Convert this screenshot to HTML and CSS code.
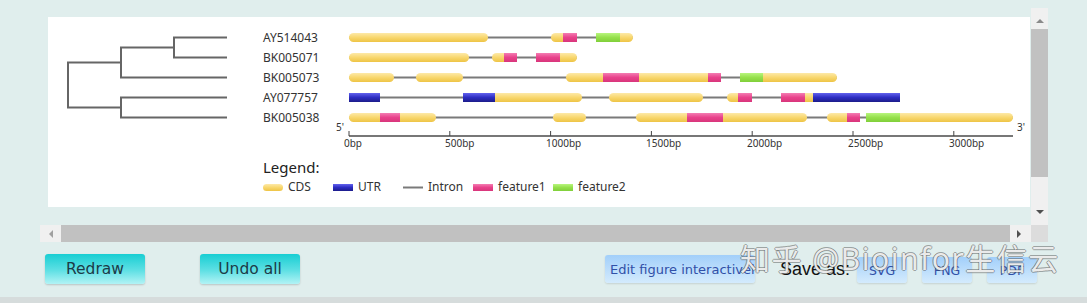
FILE: index.html
```html
<!DOCTYPE html>
<html lang="en">
<head>
  <meta charset="UTF-8">
  <title>Gene Structure Viewer</title>
  <link rel="stylesheet" href="styles.css">
</head>
<body>
  <div class="viewer">
    <div class="viewport">
      <div class="canvas">
        <svg class="figure" width="982" height="190" viewBox="48 17 982 190">
          <defs>
            <linearGradient id="gCds" x1="0" y1="0" x2="0" y2="1">
              <stop offset="0" stop-color="#fde9a8"/>
              <stop offset="0.5" stop-color="#f8d76e"/>
              <stop offset="1" stop-color="#eec446"/>
            </linearGradient>
            <linearGradient id="gUtr" x1="0" y1="0" x2="0" y2="1">
              <stop offset="0" stop-color="#6262ee"/>
              <stop offset="0.5" stop-color="#2c2cc2"/>
              <stop offset="1" stop-color="#1c1c8a"/>
            </linearGradient>
            <linearGradient id="gF1" x1="0" y1="0" x2="0" y2="1">
              <stop offset="0" stop-color="#f47db2"/>
              <stop offset="0.5" stop-color="#e8428b"/>
              <stop offset="1" stop-color="#d8367b"/>
            </linearGradient>
            <linearGradient id="gF2" x1="0" y1="0" x2="0" y2="1">
              <stop offset="0" stop-color="#b8f57e"/>
              <stop offset="0.5" stop-color="#95e04c"/>
              <stop offset="1" stop-color="#80cf3a"/>
            </linearGradient>
          </defs>

          <!-- tree -->
          <g class="tree">
            <path d="M227 37.5 H174 V57.5 H227"/>
            <path d="M174 47.5 H121 V77.5 H227"/>
            <path d="M121 62.5 H68 V107.5 H121"/>
            <path d="M227 97.5 H121 V117.5 H227"/>
          </g>

          <g class="labels">
            <text x="263" y="42">AY514043</text>
            <text x="263" y="62">BK005071</text>
            <text x="263" y="82">BK005073</text>
            <text x="263" y="102">AY077757</text>
            <text x="263" y="122">BK005038</text>
          </g>

          <!-- introns -->
          <g class="intron">
            <line x1="349" y1="37.5" x2="633" y2="37.5"/>
            <line x1="349" y1="57.5" x2="577" y2="57.5"/>
            <line x1="349" y1="77.5" x2="837" y2="77.5"/>
            <line x1="349" y1="97.5" x2="900" y2="97.5"/>
            <line x1="349" y1="117.5" x2="1013" y2="117.5"/>
          </g>

          <!-- AY514043 -->
          <rect class="cds" x="349" y="33" width="139" height="9" rx="4.5"/>
          <rect class="cds" x="551" y="33" width="26" height="9" rx="4.5"/>
          <rect class="f1" x="563" y="33" width="14" height="9"/>
          <rect class="cds" x="596" y="33" width="37" height="9" rx="4.5"/>
          <rect class="f2" x="596" y="33" width="24" height="9"/>

          <!-- BK005071 -->
          <rect class="cds" x="349" y="53" width="120" height="9" rx="4.5"/>
          <rect class="cds" x="492" y="53" width="25" height="9" rx="4.5"/>
          <rect class="f1" x="504" y="53" width="13" height="9"/>
          <rect class="cds" x="536" y="53" width="41" height="9" rx="4.5"/>
          <rect class="f1" x="536" y="53" width="24" height="9"/>

          <!-- BK005073 -->
          <rect class="cds" x="349" y="73" width="45" height="9" rx="4.5"/>
          <rect class="cds" x="416" y="73" width="47" height="9" rx="4.5"/>
          <rect class="cds" x="566" y="73" width="155" height="9" rx="4.5"/>
          <rect class="f1" x="603" y="73" width="36" height="9"/>
          <rect class="f1" x="708" y="73" width="13" height="9"/>
          <rect class="cds" x="740" y="73" width="97" height="9" rx="4.5"/>
          <rect class="f2" x="740" y="73" width="23" height="9"/>

          <!-- AY077757 -->
          <rect class="utr" x="349" y="93" width="31" height="9"/>
          <rect class="cds" x="463" y="93" width="119" height="9" rx="4.5"/>
          <rect class="utr" x="463" y="93" width="32" height="9"/>
          <rect class="cds" x="609" y="93" width="94" height="9" rx="4.5"/>
          <rect class="cds" x="727" y="93" width="25" height="9" rx="4.5"/>
          <rect class="f1" x="738" y="93" width="14" height="9"/>
          <rect class="cds" x="781" y="93" width="119" height="9" rx="4.5"/>
          <rect class="f1" x="781" y="93" width="24" height="9"/>
          <rect class="utr" x="813" y="93" width="87" height="9"/>

          <!-- BK005038 -->
          <rect class="cds" x="349" y="113" width="87" height="9" rx="4.5"/>
          <rect class="f1" x="380" y="113" width="20" height="9"/>
          <rect class="cds" x="553" y="113" width="33" height="9" rx="4.5"/>
          <rect class="cds" x="636" y="113" width="171" height="9" rx="4.5"/>
          <rect class="f1" x="687" y="113" width="36" height="9"/>
          <rect class="cds" x="827" y="113" width="33" height="9" rx="4.5"/>
          <rect class="f1" x="847" y="113" width="13" height="9"/>
          <rect class="cds" x="866" y="113" width="147" height="9" rx="4.5"/>
          <rect class="f2" x="866" y="113" width="34" height="9"/>

          <!-- axis -->
          <text class="end" x="336" y="131">5'</text>
          <text class="end" x="1017" y="131">3'</text>
          <line class="axis" x1="349" y1="136" x2="1013" y2="136"/>
          <g class="ticks">
            <line x1="349" y1="131" x2="349" y2="136"/>
            <line x1="449.8" y1="131" x2="449.8" y2="136"/>
            <line x1="550.6" y1="131" x2="550.6" y2="136"/>
            <line x1="651.4" y1="131" x2="651.4" y2="136"/>
            <line x1="752.2" y1="131" x2="752.2" y2="136"/>
            <line x1="853" y1="131" x2="853" y2="136"/>
            <line x1="953.8" y1="131" x2="953.8" y2="136"/>
          </g>
          <g class="tick-labels">
            <text x="344" y="147">0bp</text>
            <text x="445" y="147">500bp</text>
            <text x="546" y="147">1000bp</text>
            <text x="646" y="147">1500bp</text>
            <text x="747" y="147">2000bp</text>
            <text x="848" y="147">2500bp</text>
            <text x="949" y="147">3000bp</text>
          </g>

          <!-- legend -->
          <text class="legend-title" x="263" y="173">Legend:</text>
          <g class="legend">
            <rect class="cds" x="263" y="184" width="20" height="7" rx="3.5"/>
            <text x="288" y="191">CDS</text>
            <rect class="utr" x="333" y="184" width="20" height="7"/>
            <text x="358" y="191">UTR</text>
            <line class="intron-key" x1="403" y1="187.5" x2="423" y2="187.5"/>
            <text x="428" y="191">Intron</text>
            <rect class="f1" x="473" y="184" width="20" height="7"/>
            <text x="498" y="191">feature1</text>
            <rect class="f2" x="553" y="184" width="20" height="7"/>
            <text x="578" y="191">feature2</text>
          </g>
        </svg>
      </div>
    </div>
    <div class="vbar">
      <span class="arrow up"></span>
      <div class="vthumb"></div>
      <div class="spacer"></div>
      <span class="arrow down"></span>
    </div>
    <div class="hbar">
      <span class="arrow left"></span>
      <div class="hthumb"></div>
      <span class="arrow right"></span>
    </div>
    <div class="corner"></div>
  </div>

  <div class="toolbar">
    <button class="btn-cyan">Redraw</button>
    <button class="btn-cyan undo">Undo all</button>
    <button class="btn-blue edit">Edit figure interactively</button>
    <span class="save-label">Save as:</span>
    <button class="btn-blue small">SVG</button>
    <button class="btn-blue small">PNG</button>
    <button class="btn-blue small">PDF</button>
  </div>

  <div class="band"></div>

  <div class="watermark">知乎 @Bioinfor生信云</div>
</body>
</html>
```

FILE: styles.css
```css
body {
  margin: 0;
  background-color: #e0eeed;
  font-family: "DejaVu Sans", Verdana, sans-serif;
  overflow: hidden;
}

.viewer {
  display: grid;
  grid-template-columns: 991px 17px;
  grid-template-rows: 217px 17px;
  width: 1008px;
  margin: 8px 0 0 40px;
}

.viewport {
  padding: 9px 0 0 8px;
  overflow: hidden;
}
.canvas {
  width: 982px;
  height: 190px;
  background-color: #ffffff;
}
.figure {
  display: block;
  font-family: "Noto Sans", "Open Sans", sans-serif;
}

.tree path {
  fill: none;
  stroke: #666;
  stroke-width: 2;
}
.labels text {
  font-size: 12px;
  fill: #333;
}
.intron line,
.intron-key {
  stroke: #7a7a7a;
  stroke-width: 2;
}
.cds { fill: url(#gCds); }
.utr { fill: url(#gUtr); }
.f1 { fill: url(#gF1); }
.f2 { fill: url(#gF2); }

.axis {
  stroke: #777;
  stroke-width: 2;
}
.ticks line {
  stroke: #444;
  stroke-width: 1;
}
.tick-labels text {
  font-size: 10px;
  fill: #333;
}
.end {
  font-size: 10px;
  fill: #333;
}
.legend-title {
  font-size: 15px;
  fill: #222;
}
.legend text {
  font-size: 12px;
  fill: #333;
}

/* scrollbars */
.vbar {
  background-color: #f0f0f0;
  display: flex;
  flex-direction: column;
  align-items: stretch;
  padding-top: 4px;
  box-sizing: border-box;
}
.vthumb {
  height: 148px;
  background-color: #c1c1c1;
}
.spacer { flex: 1; }

.hbar {
  background-color: #f0f0f0;
  display: flex;
  align-items: stretch;
}
.hthumb {
  width: 949px;
  background-color: #c1c1c1;
}
.corner {
  background-color: #dcdcdc;
}

.arrow {
  display: flex;
  align-items: center;
  justify-content: center;
  width: 17px;
  height: 17px;
}
.arrow::before {
  content: "";
  width: 0;
  height: 0;
}
.up::before {
  border-left: 4px solid transparent;
  border-right: 4px solid transparent;
  border-bottom: 4px solid #8a8a8a;
}
.down { margin-bottom: 5px; }
.down::before {
  border-left: 4px solid transparent;
  border-right: 4px solid transparent;
  border-top: 4px solid #505050;
}
.left { width: 21px; }
.left::before {
  border-top: 4px solid transparent;
  border-bottom: 4px solid transparent;
  border-right: 4px solid #a0a0a0;
}
.right::before {
  border-top: 4px solid transparent;
  border-bottom: 4px solid transparent;
  border-left: 4px solid #505050;
}

/* buttons row */
.toolbar {
  display: flex;
  align-items: flex-start;
  padding-left: 45px;
  margin-top: 12px;
  height: 43px;
}
button {
  border: none;
  border-radius: 3px;
  padding: 0;
  cursor: pointer;
  font-family: "DejaVu Sans", Verdana, sans-serif;
}
.btn-cyan {
  width: 100px;
  height: 30px;
  font-size: 15.5px;
  color: #1c3b47;
  background: linear-gradient(to bottom, #18ced3, #5fe0e4 55%, #b2f3f5);
  box-shadow: 0 1px 2px rgba(0, 0, 0, 0.18);
}
.undo { margin-left: 55px; }

.btn-blue {
  color: #3050a8;
  font-size: 12.5px;
  background: linear-gradient(to bottom, #a2cffa, #d4ebfd);
  box-shadow: 0 1px 2px rgba(0, 0, 0, 0.12);
}
.edit {
  width: 150px;
  height: 28px;
  margin-top: 1px;
  margin-left: 305px;
  padding-left: 5px;
  font-size: 13px;
  text-align: left;
  white-space: nowrap;
  overflow: hidden;
}
.save-label {
  width: 77px;
  margin-left: 25px;
  margin-top: 5px;
  font-family: "Liberation Sans", Arial, sans-serif;
  font-size: 18px;
  color: #111;
}
.small {
  width: 50px;
  height: 26px;
  margin-top: 3px;
  margin-right: 15px;
}

.band {
  height: 10px;
  background-color: #d6dcdc;
}

.watermark {
  position: absolute;
  left: 740px;
  top: 244px;
  font-family: "Noto Sans", "Noto Sans CJK SC", sans-serif;
  font-size: 30px;
  line-height: 30px;
  letter-spacing: 1.5px;
  color: rgba(255, 255, 255, 0.88);
  text-shadow: 1px 0 0 rgba(70, 70, 70, 0.45), -1px 0 0 rgba(70, 70, 70, 0.45),
    0 1px 0 rgba(70, 70, 70, 0.45), 0 -1px 0 rgba(70, 70, 70, 0.45);
  white-space: nowrap;
  pointer-events: none;
}
```
